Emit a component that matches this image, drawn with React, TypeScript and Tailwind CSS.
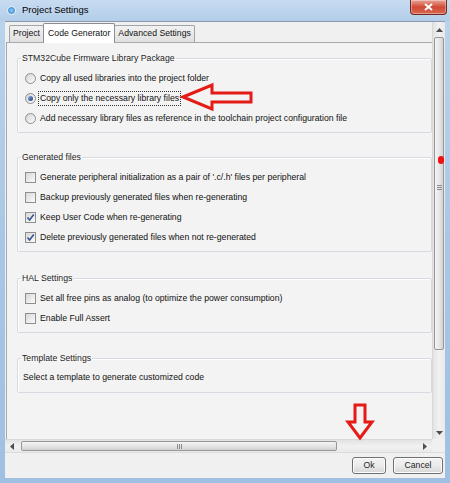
import React from "react";

const Radio = ({ checked = false }: { checked?: boolean }) => (
  <span className="w-[11px] h-[11px] shrink-0 rounded-full border border-[#8e8e8e] bg-linear-to-br from-[#d4d4d4] to-[#fcfcfc] flex items-center justify-center">
    {checked && (
      <span className="w-[5px] h-[5px] rounded-full bg-linear-to-br from-[#8aaee0] to-[#1c3d74]" />
    )}
  </span>
);

const Checkbox = ({ checked = false }: { checked?: boolean }) => (
  <span className="w-[11px] h-[11px] shrink-0 border border-[#8e8f8f] bg-linear-to-br from-[#d8d8d8] to-[#fbfbfb] flex items-center justify-center">
    {checked && (
      <svg width="9" height="9" viewBox="0 0 9 9">
        <path d="M1.5 4.5 L3.6 7 L7.8 1.5" fill="none" stroke="#3c5894" strokeWidth="1.7" />
      </svg>
    )}
  </span>
);

const Option = ({
  control,
  label,
  focused = false,
}: {
  control: React.ReactNode;
  label: string;
  focused?: boolean;
}) => (
  <div className="h-[20px] flex items-center gap-[4px] pl-[7px] whitespace-nowrap">
    {control}
    <span className={focused ? "outline-1 outline-dotted outline-[#333] px-[1px] -ml-[1px] leading-[13px]" : "leading-[13px]"}>
      {label}
    </span>
  </div>
);

const Group = ({
  title,
  children,
  className = "",
}: {
  title: string;
  children: React.ReactNode;
  className?: string;
}) => (
  <fieldset className={`border border-[#d5dbe0] rounded-[2px] pt-[3px] pb-[4px] shadow-[inset_1px_1px_0_#ffffff] ${className}`}>
    <legend className="ml-[3px] px-[1px] leading-[14px] text-[#1e1e1e]">{title}</legend>
    {children}
  </fieldset>
);

const Tab = ({ label, active = false }: { label: string; active?: boolean }) => (
  <div
    className={
      active
        ? "h-[20px] px-[4px] -mb-px z-10 flex items-center bg-white border border-b-0 border-[#8c8e94] rounded-t-[2px] -mx-[1px]"
        : "h-[17px] px-[3px] flex items-center bg-linear-to-b from-[#f2f2f2] to-[#e0e0e0] border border-b-0 border-[#a0a3a8] rounded-t-[2px]"
    }
  >
    {label}
  </div>
);

const ArrowUp = () => (
  <svg width="7" height="4" viewBox="0 0 7 4">
    <path d="M0 4 L3.5 0 L7 4 Z" fill="#4d4d4d" />
  </svg>
);
const ArrowDown = () => (
  <svg width="7" height="4" viewBox="0 0 7 4">
    <path d="M0 0 L3.5 4 L7 0 Z" fill="#4d4d4d" />
  </svg>
);
const ArrowLeft = () => (
  <svg width="4" height="7" viewBox="0 0 4 7">
    <path d="M4 0 L0 3.5 L4 7 Z" fill="#4d4d4d" />
  </svg>
);
const ArrowRight = () => (
  <svg width="4" height="7" viewBox="0 0 4 7">
    <path d="M0 0 L4 3.5 L0 7 Z" fill="#4d4d4d" />
  </svg>
);

const WinButton = ({ label, width }: { label: string; width: string }) => (
  <button
    className={`${width} h-[17px] rounded-[3px] border border-[#707070] bg-linear-to-b from-[#f3f3f3] via-[#ebebeb] to-[#d6d6d6] text-[#1e1e1e] flex items-center justify-center shadow-[inset_0_0_0_1px_#fcfcfc]`}
  >
    {label}
  </button>
);

export default function App() {
  return (
    <div className="relative w-[450px] h-[483px] flex flex-col overflow-hidden bg-linear-to-b from-[#bcd4ec] via-[#a9c7e5] to-[#9fc0e2] font-['Liberation_Sans',Arial,sans-serif] text-[8.7px] text-[#111]">
      {/* Title bar */}
      <div className="h-[21px] shrink-0 flex items-center pl-[7px] bg-linear-to-b from-[#c8dcf1] to-[#b3cde9]">
        <span className="w-[9px] h-[9px] rounded-full bg-radial from-[#8fd0ff] to-[#1c6fc0] border border-[#e8f2fb]" />
        <span className="ml-[6px] text-[9.5px] text-black">Project Settings</span>
        <div className="ml-auto self-start mr-[3px] w-[37px] h-[15px] rounded-b-[4px] border border-t-0 border-[#6f2a22] bg-linear-to-b from-[#e8a397] via-[#cf4a36] to-[#d9664f] flex items-center justify-center shadow-[inset_0_0_0_1px_rgba(255,255,255,0.35)]">
          <svg width="9" height="8" viewBox="0 0 9 8">
            <path d="M1 1 L8 7 M8 1 L1 7" stroke="#ffffff" strokeWidth="2" />
          </svg>
        </div>
      </div>

      {/* Body */}
      <div className="flex-1 mx-[5px] mb-[5px] flex flex-col bg-[#f0f0f0] border-t border-[#8a9bb0]">
        <div className="h-[430px] grid grid-cols-[1fr_13px] grid-rows-[1fr_13px]">
          {/* Scrolled content */}
          <div className="overflow-hidden flex flex-col pt-[1px]">
            <div className="h-[19px] shrink-0 flex items-end pl-[4px]">
              <Tab label="Project" />
              <Tab label="Code Generator" active />
              <Tab label="Advanced Settings" />
            </div>
            <div className="ml-[1px] w-[435px] flex-1 border-l border-t border-[#a6a9ae] bg-[#f3f3f3] pl-[10px] pr-[9px] pt-[8px] flex flex-col gap-[17px]">
              <Group title="STM32Cube Firmware Library Package">
                <Option control={<Radio />} label="Copy all used libraries into the project folder" />
                <Option control={<Radio checked />} label="Copy only the necessary library files" focused />
                <Option
                  control={<Radio />}
                  label="Add necessary library files as reference in the toolchain project configuration file"
                />
              </Group>
              <Group title="Generated files">
                <Option control={<Checkbox />} label="Generate peripheral initialization as a pair of '.c/.h' files per peripheral" />
                <Option control={<Checkbox />} label="Backup previously generated files when re-generating" />
                <Option control={<Checkbox checked />} label="Keep User Code when re-generating" />
                <Option control={<Checkbox checked />} label="Delete previously generated files when not re-generated" />
              </Group>
              <Group title="HAL Settings" className="mt-[2px]">
                <Option control={<Checkbox />} label="Set all free pins as analog (to optimize the power consumption)" />
                <Option control={<Checkbox />} label="Enable Full Assert" />
              </Group>
              <Group title="Template Settings" className="mt-[1px]">
                <div className="h-[20px] flex items-center pl-[5px] whitespace-nowrap">
                  Select a template to generate customized code
                </div>
              </Group>
            </div>
          </div>

          {/* Vertical scrollbar */}
          <div className="flex flex-col bg-linear-to-r from-[#e3e3e3] via-[#f1f1f1] to-[#e9e9e9] border-l border-[#d8d8d8]">
            <div className="h-[13px] shrink-0 flex items-center justify-center pt-[2px]">
              <ArrowUp />
            </div>
            <div className="relative h-[313px] mx-[1px] mt-[2px] rounded-[2px] border border-[#979797] bg-linear-to-r from-[#f4f4f4] via-[#e8e8e8] to-[#d2d2d2] flex items-center justify-center">
              <div className="flex flex-col gap-[1px] mt-[-12px]">
                <span className="w-[5px] h-px bg-[#8a8a8a]" />
                <span className="w-[5px] h-px bg-[#8a8a8a]" />
                <span className="w-[5px] h-px bg-[#8a8a8a]" />
              </div>
              <span className="absolute left-[3px] top-[118px] w-[6px] h-[8px] rounded-full bg-[#ee1111]" />
            </div>
            <div className="flex-1" />
            <div className="h-[13px] shrink-0 flex items-center justify-center">
              <ArrowDown />
            </div>
          </div>

          {/* Horizontal scrollbar */}
          <div className="flex items-stretch bg-linear-to-b from-[#e3e3e3] via-[#f1f1f1] to-[#e9e9e9] border-t border-[#d8d8d8]">
            <div className="w-[14px] shrink-0 flex items-center justify-center">
              <ArrowLeft />
            </div>
            <div className="w-[316px] my-[1px] ml-[2px] rounded-[2px] border border-[#979797] bg-linear-to-b from-[#f4f4f4] via-[#e6e6e6] to-[#d2d2d2] flex items-center justify-center">
              <div className="flex gap-[1px]">
                <span className="w-px h-[5px] bg-[#8a8a8a]" />
                <span className="w-px h-[5px] bg-[#8a8a8a]" />
                <span className="w-px h-[5px] bg-[#8a8a8a]" />
              </div>
            </div>
            <div className="flex-1" />
            <div className="w-[14px] shrink-0 flex items-center justify-center">
              <ArrowRight />
            </div>
          </div>
          <div className="bg-[#f0f0f0]" />
        </div>

        {/* Footer */}
        <div className="flex-1 flex items-center justify-end gap-[7px] pr-[2px] border-t border-[#dcdcdc]">
          <WinButton label="Ok" width="w-[34px]" />
          <WinButton label="Cancel" width="w-[50px]" />
        </div>
      </div>

      {/* Red annotation arrows */}
      <svg className="absolute left-[175px] top-[80px]" width="85" height="32" viewBox="0 0 85 32">
        <polygon points="8,17 37,5 37,13 76,13 76,22 37,22 37,29" fill="none" stroke="#e41b17" strokeWidth="3" strokeLinejoin="miter" />
      </svg>
      <svg className="absolute left-[344px] top-[400px]" width="32" height="42" viewBox="0 0 32 42">
        <polygon points="11,5 21,5 21,22 28,22 16,38 4,22 11,22" fill="none" stroke="#e41b17" strokeWidth="3" strokeLinejoin="miter" />
      </svg>
    </div>
  );
}
